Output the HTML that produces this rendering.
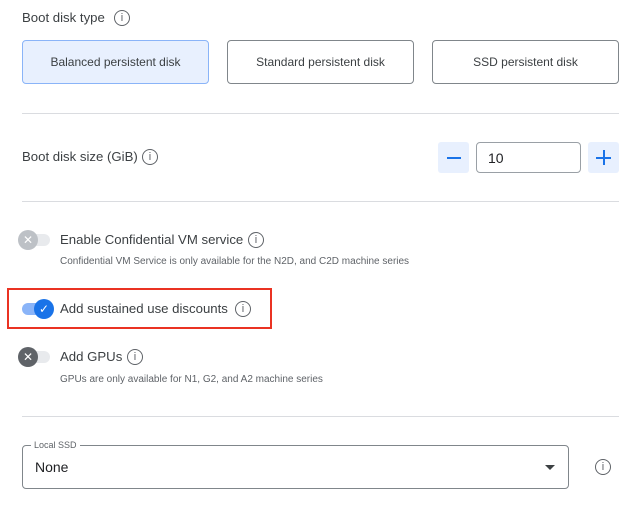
<!DOCTYPE html>
<html><head><style>
body{margin:0;width:640px;height:505px;background:#fff;font-family:"Liberation Sans",Arial,sans-serif;color:#3c4043;position:relative;overflow:hidden}
.a{position:absolute}
.t{font-size:13.2px;line-height:16px}
.btn{position:absolute;top:40px;height:44px;width:187px;border:1px solid #80868b;border-radius:4px;box-sizing:border-box;font-size:12px;display:flex;align-items:center;justify-content:center;color:#3c4043}
.hr{position:absolute;left:22px;width:597px;height:1px;background:#dadce0}
.info{position:absolute;width:16px;height:16px;border:1.4px solid #5f6368;border-radius:50%;box-sizing:border-box;margin:-8px 0 0 -8px}
.info:after{content:"i";position:absolute;left:0;right:0;top:1px;font-size:11px;line-height:12px;text-align:center;color:#5f6368}
.track{position:absolute;width:30px;height:12px;border-radius:6px}
.thumb{position:absolute;width:20px;height:20px;border-radius:50%;color:#fff;font-size:12px;line-height:20px;text-align:center}
.sub{font-size:10px;color:#5f6368}
</style></head><body>
<div class="a t" style="left:22px;top:10px">Boot disk type</div>
<div class="info" style="left:122px;top:18px"></div>
<div class="btn" style="left:22px;background:#e8f0fe;border-color:#8ab4f8">Balanced persistent disk</div>
<div class="btn" style="left:227px">Standard persistent disk</div>
<div class="btn" style="left:432px">SSD persistent disk</div>
<div class="hr" style="top:113px"></div>
<div class="a t" style="left:22px;top:149px">Boot disk size (GiB)</div>
<div class="info" style="left:150px;top:157px"></div>
<div class="a" style="left:438px;top:142px;width:31px;height:31px;background:#e8f0fe;border-radius:3px"><div class="a" style="left:9px;top:15px;width:14px;height:1.6px;background:#1a73e8"></div></div>
<div class="a" style="left:476px;top:142px;width:105px;height:31px;border:1px solid #9aa0a6;border-radius:4px;box-sizing:border-box;font-size:14px;padding:7px 0 0 11px;color:#202124">10</div>
<div class="a" style="left:588px;top:142px;width:31px;height:31px;background:#e8f0fe;border-radius:3px"><div class="a" style="left:8px;top:15px;width:15px;height:1.6px;background:#1a73e8"></div><div class="a" style="left:15px;top:8px;width:1.6px;height:15px;background:#1a73e8"></div></div>
<div class="hr" style="top:201px"></div>

<div class="track" style="left:20px;top:234px;background:#e8eaed"></div>
<div class="thumb" style="left:18px;top:230px;background:#bdc1c6">✕</div>
<div class="a t" style="left:60px;top:232px">Enable Confidential VM service</div>
<div class="info" style="left:256px;top:240px"></div>
<div class="a sub" style="left:60px;top:256px">Confidential VM Service is only available for the N2D, and C2D machine series</div>

<div class="a" style="left:7px;top:288px;width:265px;height:41px;border:2px solid #ea3323;box-sizing:border-box"></div>
<div class="track" style="left:22px;top:303px;background:#8ab4f8"></div>
<div class="thumb" style="left:34px;top:299px;background:#1a73e8">✓</div>
<div class="a t" style="left:60px;top:301px">Add sustained use discounts</div>
<div class="info" style="left:243px;top:309px"></div>

<div class="track" style="left:20px;top:351px;background:#e8eaed"></div>
<div class="thumb" style="left:18px;top:347px;background:#5f6368">✕</div>
<div class="a t" style="left:60px;top:349px">Add GPUs</div>
<div class="info" style="left:135px;top:357px"></div>
<div class="a sub" style="left:60px;top:374px">GPUs are only available for N1, G2, and A2 machine series</div>
<div class="hr" style="top:416px"></div>

<div class="a" style="left:22px;top:445px;width:547px;height:44px;border:1px solid #80868b;border-radius:4px;box-sizing:border-box"></div>
<div class="a" style="left:31px;top:440px;background:#fff;padding:0 3px;font-size:9px;color:#5f6368">Local SSD</div>
<div class="a" style="left:35px;top:459px;font-size:14px;color:#202124">None</div>
<div class="a" style="left:545px;top:465px;width:0;height:0;border-left:5px solid transparent;border-right:5px solid transparent;border-top:5px solid #3c4043"></div>
<div class="info" style="left:603px;top:467px"></div>
</body></html>
